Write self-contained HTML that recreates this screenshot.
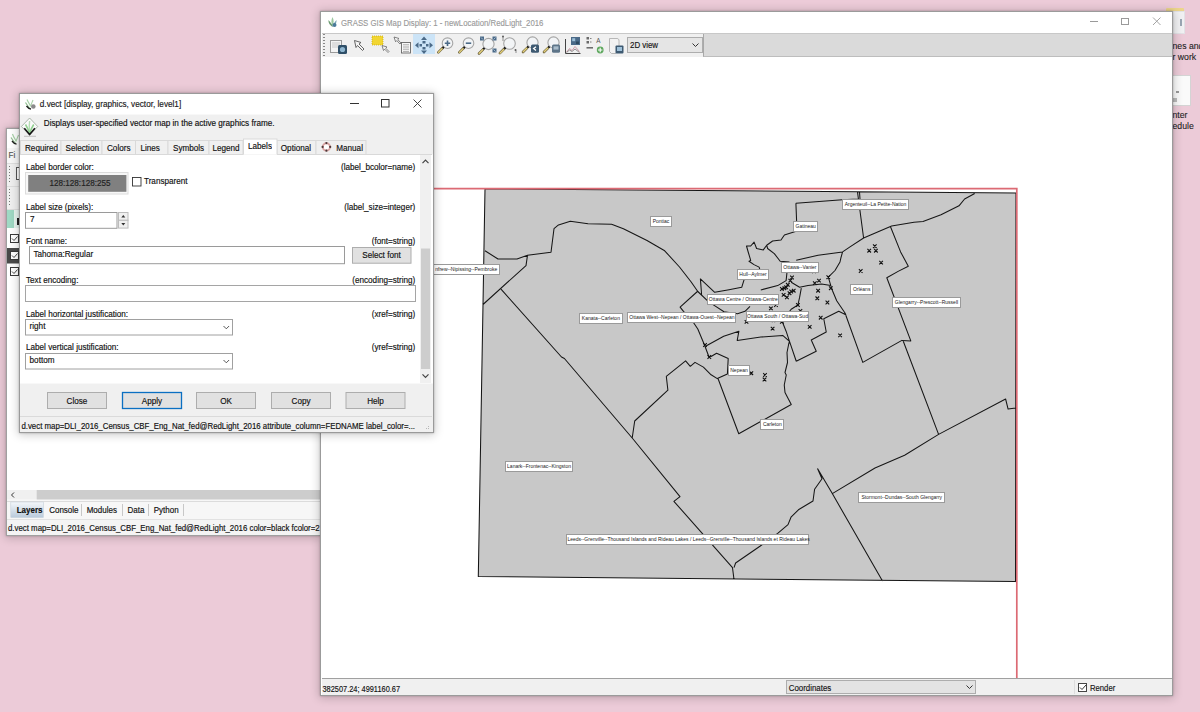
<!DOCTYPE html>
<html><head><meta charset="utf-8">
<style>
*{box-sizing:border-box;margin:0;padding:0}
html,body{width:1200px;height:712px;overflow:hidden}
body{background:#eccbd8;font-family:"Liberation Sans",sans-serif;font-size:8px;color:#111;position:relative}
.a{position:absolute}
.t{position:absolute;white-space:nowrap;line-height:10px;-webkit-text-stroke:0.15px currentColor;transform:scaleY(1.09);transform-origin:0 7.8px}
#dv>.t{margin-top:0.9px;font-size:8.15px}
#md .t{text-shadow:none;-webkit-text-stroke:0.12px currentColor}
.win{position:absolute;background:#fff;box-shadow:0 0 2px rgba(0,0,0,0.25),0 1px 9px 1px rgba(0,0,0,0.2)}
.win::after{content:"";position:absolute;left:0;top:0;right:0;bottom:0;border:1px solid var(--bc,#8f8f8f);pointer-events:none;z-index:50}
.btn{position:absolute;background:#e1e1e1;border:1px solid #adadad;text-align:center;line-height:14px;font-size:8px}
.inp{position:absolute;background:#fff;border:1px solid #7a7a7a}
.chk{position:absolute;width:9px;height:9px;border:1px solid #333;background:#fff}
.lbl{position:absolute;background:#fff;border:1px solid #9a9a9a;font-size:5px;line-height:9px;height:11px;white-space:nowrap;padding:0;text-align:center;color:#1a1a1a;overflow:visible}
.lbl span{display:inline-block;transform:scaleY(1.12);transform-origin:50% 60%}
</style></head><body>

<!-- desktop icons right -->
<div class="a" style="left:1166px;top:8px;width:18px;height:3.5px;background:#ecd58c;border-radius:1px"></div>
<div class="a" style="left:1166px;top:11px;width:19px;height:23px;background:#f1f1f3;border:1px solid #e2e2e6"></div>
<div class="a" style="left:1180px;top:19px;width:2px;height:7px;background:#9aa6b3"></div>
<div class="t" style="left:1172.5px;top:41px;font-size:8.7px;color:#222;-webkit-text-stroke:0.1px #222">nes and</div>
<div class="t" style="left:1172.5px;top:51.5px;font-size:8.7px;color:#222;-webkit-text-stroke:0.1px #222">r work</div>
<div class="a" style="left:1170px;top:75px;width:21px;height:31px;background:#fafafa;border:1px solid #d4d4d4"></div>
<div class="a" style="left:1176px;top:91px;width:3px;height:2px;background:#999"></div>
<div class="a" style="left:1172px;top:98px;width:5px;height:4px;background:#bbb"></div>
<div class="t" style="left:1172.5px;top:110px;font-size:8.7px;color:#222;-webkit-text-stroke:0.1px #222">nter</div>
<div class="t" style="left:1172.5px;top:121px;font-size:8.7px;color:#222;-webkit-text-stroke:0.1px #222">edule</div>

<!-- Layer manager window -->
<div class="win" id="lm" style="left:6px;top:128px;width:315px;height:408px;--bc:#a0a0a0;z-index:1">
 <svg class="a" style="left:0;top:0" width="315" height="407" viewBox="6 128 315 407">
  <rect x="6" y="148" width="315" height="15" fill="#f7f7f7"/>
  <rect x="6" y="163" width="315" height="47" fill="#f0f0f0"/>
  <path d="M6 163.5h315M6 186.5h315M6 209.5h315" stroke="#dedede"/>
  <path d="M9.5 166v17M9.5 189v18" stroke="#777" stroke-width="1" stroke-dasharray="1 2"/>
  <rect x="16.5" y="167.5" width="4" height="12" fill="#fff" stroke="#555"/>
  <path d="M12.5 134 C13.5 137 15 139 16 141" stroke="#a8d2a8" stroke-width="1.2" fill="none"/><path d="M11 137.5 C12.5 140 14 142 15.5 143" stroke="#90c090" stroke-width="1.2" fill="none"/><path d="M18.5 135 C17.5 137.5 16.5 139.5 16 141.5" stroke="#a8d2a8" stroke-width="1.1" fill="none"/><path d="M12 141 C13.5 143 15 144 16.5 144" stroke="#1c1c1c" stroke-width="1.3" fill="none"/>
  <rect x="7" y="210" width="7" height="18" fill="#9fd9c4"/>
  <rect x="14" y="210" width="5" height="18" fill="#e8f6f1"/>
  <rect x="17" y="218" width="2.5" height="7" fill="#222"/>
  <rect x="7" y="248" width="13" height="15.5" fill="#4a4a4a"/>
  <g fill="#fff" stroke="#3a3a3a" stroke-width="1">
   <rect x="10.5" y="234.5" width="8" height="8"/>
   <rect x="10.5" y="251.5" width="8" height="8"/>
   <rect x="10.5" y="267.5" width="8" height="8"/>
  </g>
  <path d="M12 238.5l2 2l3.5-4M12 255.5l2 2l3.5-4M12 271.5l2 2l3.5-4" stroke="#333" fill="none" stroke-width="0.9"/>
  <rect x="6" y="490" width="315" height="9.7" fill="#f0f0f0"/>
  <rect x="36.7" y="490" width="284" height="9.7" fill="#cdcdcd"/>
  <path d="M14 492.5 L11.5 495 L14 497.5" stroke="#333" fill="none" stroke-width="1"/>
  <rect x="6" y="499.7" width="315" height="19.3" fill="#f7f7f7"/>
  <path d="M6 501.5h315" stroke="#dcdcdc"/>
  <defs><linearGradient id="lt" x1="0" y1="0" x2="0" y2="1"><stop offset="0" stop-color="#f4f7fa"/><stop offset="1" stop-color="#b9cadb"/></linearGradient></defs>
  <rect x="10.8" y="502" width="32.5" height="15.5" fill="url(#lt)" stroke="#c5d0da" stroke-width="0.6"/>
  <path d="M81.5 504v12M122.5 504v12M148.5 504v12M183.5 504v12" stroke="#c8c8c8"/>
  <path d="M6 519.5h315" stroke="#e2e2e2"/>
  <rect x="6" y="520" width="315" height="15" fill="#f4f4f4"/>
 </svg>
 <div class="t" style="left:2.5px;top:22.5px;font-size:8px;color:#555">Fi</div>
 <div class="t" style="left:10.7px;top:377.5px;font-weight:bold;font-size:8px">Layers</div>
 <div class="t" style="left:43.2px;top:377.5px;font-size:8px">Console</div>
 <div class="t" style="left:80.7px;top:377.5px;font-size:8px">Modules</div>
 <div class="t" style="left:121.5px;top:377.5px;font-size:8px">Data</div>
 <div class="t" style="left:147.7px;top:377.5px;font-size:8px">Python</div>
 <div class="t" style="left:2px;top:396px;font-size:7.85px">d.vect map=DLI_2016_Census_CBF_Eng_Nat_fed@RedLight_2016 color=black fcolor=2</div>
</div>

<!-- Map display window -->
<div class="win" id="md" style="left:320px;top:11px;width:853px;height:685px;--bc:#9b9b9b;z-index:2"><div class="a" style="left:1px;top:1px;width:851px;height:683px">
 <!-- title -->
 <svg class="a" style="left:6px;top:4px" width="11" height="12" viewBox="0 0 11 12">
  <path d="M5.5 11 C3 9 1 7 1.5 4 C3 6 4 7 5.5 9 Z" fill="#6a9a70"/>
  <path d="M5.5 11 C8 9 10 7 9.5 4 C8 6 7 7 5.5 9 Z" fill="#7aa4b4"/>
  <path d="M5.5 10 C4 7 4 4 5.5 1 C7 4 7 7 5.5 10 Z" fill="#9cc8a0"/>
  <circle cx="7.5" cy="9" r="2" fill="#4a7a9a"/>
 </svg>
 <div class="t" style="left:20px;top:6.8px;font-size:7.8px;color:#9a9a9a;text-shadow:none">GRASS GIS Map Display: 1 - newLocation/RedLight_2016</div>
 <div class="a" style="left:769px;top:9px;width:8px;height:1px;background:#9a9a9a"></div>
 <div class="a" style="left:800px;top:5.5px;width:7.5px;height:7.5px;border:1px solid #9a9a9a"></div>
 <svg class="a" style="left:831px;top:5px" width="10" height="10"><path d="M1 0.5L8.5 8M8.5 0.5L1 8" stroke="#9a9a9a" stroke-width="0.9"/></svg>
 <!-- toolbar -->
 <div class="a" style="left:1px;top:21px;width:850px;height:24px;background:#f0f0f0;border-top:1px solid #c8c8c8"></div>
 <div class="a" style="left:2px;top:22px;width:2px;height:22px;background:repeating-linear-gradient(#888 0 1px,transparent 1px 3px)"></div>
 <div class="a" style="left:382px;top:22px;width:469px;height:23px;background:#dadada;border-left:1px solid #a8a8a8;border-bottom:1px solid #bdbdbd"></div>
 <div class="a" style="left:306px;top:25px;width:76px;height:16px;background:#e5e5e5;border:1px solid #adadad"></div>
 <div class="t" style="left:309px;top:28.5px;font-size:7.9px;color:#111;transform:scaleY(1.15)">2D view</div>
 <svg class="a" style="left:371px;top:31px" width="7" height="4"><path d="M0.5 0.5L3.5 3.5L6.5 0.5" stroke="#333" fill="none"/></svg>
 <div class="a" style="left:92px;top:22px;width:22px;height:20px;background:#cce4f7"></div>
 <svg class="a" style="left:0;top:0;z-index:5" width="851" height="45" viewBox="321 12 851 45">
  <!-- 1 display map -->
  <rect x="330.5" y="40.5" width="11" height="12" fill="#f4f4f4" stroke="#9a9a9a"/>
  <path d="M332 43h8M332 45h8M332 47h6" stroke="#c8c8c8"/>
  <rect x="338" y="45" width="9" height="9" rx="1.5" fill="#2f4f68"/>
  <circle cx="342.5" cy="49.5" r="2.6" fill="#8fb6d0"/>
  <!-- 2 pointer -->
  <path d="M354.5 40.5 L361 42.5 L359 44 L364 49 L362.5 50.5 L357.5 45.5 L356 47.5 Z" fill="#f4f4f4" stroke="#555" stroke-width="0.9"/>
  <!-- 3 select -->
  <rect x="372" y="36" width="11" height="9" fill="#f2d633" stroke="#c9a800" stroke-dasharray="1 1" stroke-width="0.7"/>
  <path d="M382 45.5 L387 47 L385.7 48.2 L389 51.5 L388 52.5 L384.7 49.2 L383.5 50.5 Z" fill="#f4f4f4" stroke="#666" stroke-width="0.8"/>
  <!-- 4 query -->
  <path d="M394 37 L399 38.5 L397.8 39.6 L401 43 L400 44 L396.8 40.6 L395.6 41.8 Z" fill="#f4f4f4" stroke="#666" stroke-width="0.8"/>
  <rect x="401.5" y="42.5" width="9" height="10.5" fill="#f7f7f7" stroke="#666" stroke-width="0.9"/>
  <path d="M403 44.8h6M403 47h6M403 49.2h6M403 51.4h6" stroke="#777" stroke-width="0.6"/>
  <!-- 5 pan -->
  <g fill="#4b6a88">
   <path d="M424 36.5 L427 40 L421 40 Z"/><path d="M424 54 L427 50.5 L421 50.5 Z"/>
   <path d="M415 45.2 L418.5 42.2 L418.5 48.2 Z"/><path d="M433 45.2 L429.5 42.2 L429.5 48.2 Z"/>
   <rect x="422.5" y="41" width="3" height="2.5"/><rect x="422.5" y="47" width="3" height="2.5"/>
   <rect x="419.5" y="44" width="2.5" height="2.5"/><rect x="426" y="44" width="2.5" height="2.5"/>
  </g>
  <!-- 6 zoom in -->
  <circle cx="447.5" cy="43.2" r="5.3" fill="#f2f4f6" stroke="#a5a5a5" stroke-width="1.1"/><path d="M443.8 46.9 L442.0 48.7" stroke="#111" stroke-width="2.2"/><path d="M442.0 48.7 L438.3 52.4" stroke="#6d6440" stroke-width="2.6" stroke-linecap="round"/><path d="M442.0 48.7 L438.5 52.2" stroke="#e3cf7a" stroke-width="1.4" stroke-linecap="round"/><path d="M444.8 43.2h5.4M447.5 40.5v5.4" stroke="#4b6a88" stroke-width="1.6"/>
  <!-- 7 zoom out -->
  <circle cx="468.5" cy="43.2" r="5.3" fill="#f2f4f6" stroke="#a5a5a5" stroke-width="1.1"/><path d="M464.8 46.9 L463.0 48.7" stroke="#111" stroke-width="2.2"/><path d="M463.0 48.7 L459.3 52.4" stroke="#6d6440" stroke-width="2.6" stroke-linecap="round"/><path d="M463.0 48.7 L459.5 52.2" stroke="#e3cf7a" stroke-width="1.4" stroke-linecap="round"/><path d="M465.8 43.2h5.4" stroke="#4b6a88" stroke-width="1.6"/>
  <!-- 8 zoom extent -->
  <circle cx="488.5" cy="44" r="5.6" fill="#f2f4f6" stroke="#a5a5a5" stroke-width="1.1"/><path d="M484.5 48.0 L482.7 49.8" stroke="#111" stroke-width="2.2"/><path d="M482.7 49.8 L479.0 53.5" stroke="#6d6440" stroke-width="2.6" stroke-linecap="round"/><path d="M482.7 49.8 L479.2 53.3" stroke="#e3cf7a" stroke-width="1.4" stroke-linecap="round"/><g fill="#4b6a88"><rect x="480" y="36.5" width="4" height="4"/><rect x="492.5" y="36.5" width="4" height="4"/><rect x="492.5" y="48.5" width="4" height="4"/></g><path d="M481 37.5l2 2M495.5 37.5l-2 2M495.5 51.5l-2 -2" stroke="#cfe0ee" stroke-width="0.7"/>
  <!-- 9 zoom region -->
  <circle cx="509.5" cy="43.5" r="5.8" fill="#f2f4f6" stroke="#a5a5a5" stroke-width="1.1"/><path d="M505.4 47.6 L503.6 49.4" stroke="#111" stroke-width="2.2"/><path d="M503.6 49.4 L499.9 53.1" stroke="#6d6440" stroke-width="2.6" stroke-linecap="round"/><path d="M503.6 49.4 L500.1 52.9" stroke="#e3cf7a" stroke-width="1.4" stroke-linecap="round"/><path d="M503 36v5M516 50.5v2.5" stroke="#666" stroke-width="0.7"/><circle cx="503" cy="36.5" r="0.9" fill="#555"/><circle cx="515.5" cy="50" r="1" fill="#555"/>
  <!-- 10 zoom back -->
  <circle cx="532.5" cy="42.5" r="5.6" fill="#f2f4f6" stroke="#a5a5a5" stroke-width="1.1"/><path d="M528.5 46.5 L526.7 48.3" stroke="#111" stroke-width="2.2"/><path d="M526.7 48.3 L523.0 52.0" stroke="#6d6440" stroke-width="2.6" stroke-linecap="round"/><path d="M526.7 48.3 L523.2 51.8" stroke="#e3cf7a" stroke-width="1.4" stroke-linecap="round"/><rect x="531" y="44.5" width="8" height="8.2" rx="1.5" fill="#3e5a72"/><path d="M536 46.7 L533.6 48.6 L536 50.5" stroke="#fff" stroke-width="1.3" fill="none"/>
  <!-- 11 zoom options -->
  <circle cx="553.5" cy="42.5" r="5.6" fill="#f2f4f6" stroke="#a5a5a5" stroke-width="1.1"/><path d="M549.5 46.5 L547.7 48.3" stroke="#111" stroke-width="2.2"/><path d="M547.7 48.3 L544.0 52.0" stroke="#6d6440" stroke-width="2.6" stroke-linecap="round"/><path d="M547.7 48.3 L544.2 51.8" stroke="#e3cf7a" stroke-width="1.4" stroke-linecap="round"/><rect x="552" y="44.5" width="8" height="8.2" rx="1.5" fill="#5d7488"/><rect x="553.5" y="46.3" width="5" height="3.3" fill="#a9bccb"/>
  <!-- 12 analyze -->
  <path d="M565.5 39 V53.5 H580.5" stroke="#444" fill="none" stroke-width="1"/>
  <path d="M566.5 52 L569.5 48.5 L572 50.5 L575 46.5 L579.5 51.5" stroke="#c98a9a" fill="none" stroke-width="0.8"/>
  <path d="M566.5 52.5 L569.5 50 L572 51.5 L575 49 L579.5 52.5" stroke="#666" fill="none" stroke-width="0.7"/>
  <rect x="571" y="37" width="9" height="8" fill="#4b6a88"/><rect x="572.2" y="38.2" width="3" height="3" fill="#9ec0d8"/><rect x="576" y="41.5" width="3" height="2.5" fill="#2f4a60"/>
  <!-- 13 overlay -->
  <rect x="586.5" y="37" width="2.5" height="2.5" fill="#6a6a6a"/><rect x="586.5" y="41" width="2.5" height="2.5" fill="#6a6a6a"/>
  <path d="M590 38.5h1.5M590 42h1.5" stroke="#666" stroke-width="0.8"/>
  <path d="M586.5 47.8h6.5" stroke="#666" stroke-width="1.5"/>
  <text x="596.3" y="42.6" font-size="6.3" fill="#555" font-family="Liberation Sans">A</text>
  <circle cx="600.2" cy="50" r="3.4" fill="#5fa85f"/><path d="M598 50h4.4M600.2 47.8v4.4" stroke="#fff" stroke-width="1.1"/>
  <!-- 14 save -->
  <path d="M609.5 38.5 H617 C618.5 38.5 619 39.5 619 41 V49 M609.5 38.5 V51.5 L611.5 53.5 H616" fill="#f3f3f3" stroke="#a8a8a8" stroke-width="0.8"/>
  <rect x="615.5" y="45.5" width="8" height="8" rx="1" fill="#3e5a72"/><rect x="617" y="47" width="5" height="4" fill="#9ec0d8"/>
 </svg>
 <!-- canvas -->
 <div class="a" style="left:1px;top:45px;width:850px;height:621px;background:#fff"></div>
 <!-- status -->
 <div class="a" style="left:1px;top:666px;width:850px;height:17px;background:#f0f0f0;border-top:1px solid #a0a0a0"></div>
 <div class="t" style="left:1.5px;top:672.5px;font-size:7.4px;color:#111;transform:scaleY(1.25)">382507.24; 4991160.67</div>
 <div class="a" style="left:465px;top:668px;width:190px;height:14px;background:#e3e3e3;border:1px solid #adadad"></div>
 <div class="t" style="left:467.7px;top:671.8px;font-size:7.9px;color:#111;transform:scaleY(1.18)">Coordinates</div>
 <svg class="a" style="left:645px;top:673px" width="7" height="4"><path d="M0.5 0.5L3.5 3.5L6.5 0.5" stroke="#333" fill="none"/></svg>
 <div class="a" style="left:753px;top:668px;width:1px;height:14px;background:#ddd"></div>
 <div class="chk" style="left:757px;top:671px;border-color:#444"></div>
 <svg class="a" style="left:758px;top:672px" width="8" height="7"><path d="M1 3.5L3 5.5L7 1" stroke="#333" fill="none"/></svg>
 <div class="t" style="left:769px;top:671.8px;font-size:7.7px;color:#111;transform:scaleY(1.18)">Render</div>
</div></div>

<!-- map -->
<div class="a" style="left:0;top:0;width:1200px;height:712px;z-index:3;pointer-events:none">
<svg class="a" style="left:0;top:0" width="1200" height="712">
 <defs><clipPath id="cv"><rect x="322" y="57" width="849" height="621"/></clipPath></defs>
 <g clip-path="url(#cv)">
 <path d="M485,188.9 L1016,193 L1015.5,581.6 L478.3,576.5 Z" fill="#c8c8c8"/>
 <path d="M485,188.9 L1016,193 L1015.5,581.6 L478.3,576.5 Z M485,250.8 L498,259 L517,259 L527.5,255.2 L551,252.3 L554,228.7 L558.5,224.9 L570.3,221.3 L588,223.7 L611.6,224.3 L623.4,228.7 L647,240.5 L664.7,250.8 L679.5,267 L691,281.8 L697.8,291.5 L707.1,300.4 L713,304.6 L724,311.7 L737.5,313.8 L745,311.3 L750,306.3 M483,304.5 L526,265.6 L527.5,255.2 M501,289.2 L561.5,357 L564.4,358.5 L632.2,438 L680,496.6 L673.9,501.3 L732.5,567.7 L734,579.5 M697.4,291.5 L680.1,307.1 L683.5,311.3 L693.6,322.7 L697.8,329 L704.6,345.2 L709,357 M701.6,294.5 L700.4,278.9 L714.7,292.3 L729,289.8 L741.7,287.3 L744.2,279.3 L744,272 M704.6,346.7 L723.7,336.2 L738.9,331.2 L737.2,340.4 L760.8,337.1 L782.7,335.4 L789.5,341.3 M708.9,357.8 L716.6,353.2 L728.2,358.6 L727.4,374 L717.3,378.6 L711.1,374.8 L703.4,367.1 L695,362.4 L690.3,366.3 L685.6,360.9 L666.3,376.3 M632.2,438 L634.7,421 L667.9,390.2 L666.3,376.3 M717.9,378.3 L738.75,433.75 L791.25,404.5 L785,392.5 L784.25,385 L786.25,375 L785,372.5 L787.5,362.5 L787,352.5 L788.75,343.75 L789.5,341.3 M789.5,341.3 L786.1,331.2 L782.7,322.7 L788.6,312.6 L791.2,309.2 L797.9,305 L799.6,297.4 L801.3,288.2 M760.8,289.9 L777.7,285.6 L786.1,280.6 L787,272.2 L787,262 M791.2,282.3 L799.6,287.3 L808,285.6 L821.5,284 L830.8,285.6 M796.2,260.3 L818.1,255.3 L842.6,251.9 L850,246.9 L863.6,238 L891.6,226 L914,222.2 L923,221.5 L941,214.8 L959,205.8 L964.6,199 L974.7,193.5 M842.6,251.9 L840.9,257.8 L840,262 L835,270.5 L828.3,277.2 L830.8,285.6 L832.5,290.7 L836.7,300.8 L845,313 L862.8,362.4 L901.9,340.4 L910.8,340.9 L886.8,277.7 L898.1,271.4 L908.3,266.3 L900.6,251.9 L890.5,226.7 M903.2,341 L938.6,434.4 M832.3,493.6 L875,468 L904.6,455.2 L938.6,434.4 L1005.6,399 L1008.1,409.1 L1015.7,407.9 M817.5,468.5 L832.3,493.6 L882.5,581 M817.5,468.5 L822,478.8 L814.6,489.2 L813,501 L798.4,509.8 L791,517.2 L788,524.6 L777.7,533.4 L760.3,546 L735.6,563 L734,567.7 M796.25,361.25 L816.25,351.25 L811.25,340 L826.25,332 L823.75,318.75 L838.75,311.25 L846.25,315 M789.5,341.3 L796.25,361.25 M857.5,192 L863.6,238 M859.5,192 L860,199 M795.9,203.2 L842.3,199.7 L858,199 M795.9,203.2 L797,231 L784.4,235 L781,240 L772.6,241 L766.7,245.2 L767.6,248.5 L774.3,253.6 L780.2,261.2 L789.5,262 M766.7,245.2 L763.3,249.9 L756.6,248.5 L754.1,242.1 L750.7,246 L746.5,246 L748.2,252 L750.7,260.4 L749,261.2 L754,264.6 L759.1,267.1 L760,270" fill="none" stroke="#151515" stroke-width="1.05" stroke-linejoin="round"/>
 <path d="M812.1,269.5 l3.6,3.6 m0,-3.6 l-3.6,3.6 M790.2,275.7 l3.6,3.6 m0,-3.6 l-3.6,3.6 M788.5,278.8 l3.6,3.6 m0,-3.6 l-3.6,3.6 M786.0,283.0 l3.6,3.6 m0,-3.6 l-3.6,3.6 M782.6,286.4 l3.6,3.6 m0,-3.6 l-3.6,3.6 M780.1,287.2 l3.6,3.6 m0,-3.6 l-3.6,3.6 M784.3,285.5 l3.6,3.6 m0,-3.6 l-3.6,3.6 M789.4,289.7 l3.6,3.6 m0,-3.6 l-3.6,3.6 M791.9,288.9 l3.6,3.6 m0,-3.6 l-3.6,3.6 M787.7,291.4 l3.6,3.6 m0,-3.6 l-3.6,3.6 M781.8,293.1 l3.6,3.6 m0,-3.6 l-3.6,3.6 M785.1,295.6 l3.6,3.6 m0,-3.6 l-3.6,3.6 M813.0,281.3 l3.6,3.6 m0,-3.6 l-3.6,3.6 M817.2,278.8 l3.6,3.6 m0,-3.6 l-3.6,3.6 M826.5,275.4 l3.6,3.6 m0,-3.6 l-3.6,3.6 M829.0,286.4 l3.6,3.6 m0,-3.6 l-3.6,3.6 M816.3,288.9 l3.6,3.6 m0,-3.6 l-3.6,3.6 M815.5,296.5 l3.6,3.6 m0,-3.6 l-3.6,3.6 M825.6,300.7 l3.6,3.6 m0,-3.6 l-3.6,3.6 M818.9,315.9 l3.6,3.6 m0,-3.6 l-3.6,3.6 M807.9,325.1 l3.6,3.6 m0,-3.6 l-3.6,3.6 M838.3,333.6 l3.6,3.6 m0,-3.6 l-3.6,3.6 M796.1,303.2 l3.6,3.6 m0,-3.6 l-3.6,3.6 M798.6,309.1 l3.6,3.6 m0,-3.6 l-3.6,3.6 M800.3,315.0 l3.6,3.6 m0,-3.6 l-3.6,3.6 M785.1,315.9 l3.6,3.6 m0,-3.6 l-3.6,3.6 M771.7,318.4 l3.6,3.6 m0,-3.6 l-3.6,3.6 M770.8,326.8 l3.6,3.6 m0,-3.6 l-3.6,3.6 M780.1,320.1 l3.6,3.6 m0,-3.6 l-3.6,3.6 M744.7,320.1 l3.6,3.6 m0,-3.6 l-3.6,3.6 M774.2,303.2 l3.6,3.6 m0,-3.6 l-3.6,3.6 M769.1,306.6 l3.6,3.6 m0,-3.6 l-3.6,3.6 M867.4,248.9 l3.6,3.6 m0,-3.6 l-3.6,3.6 M873.0,244.4 l3.6,3.6 m0,-3.6 l-3.6,3.6 M874.1,248.9 l3.6,3.6 m0,-3.6 l-3.6,3.6 M879.3,260.8 l3.6,3.6 m0,-3.6 l-3.6,3.6 M858.9,269.2 l3.6,3.6 m0,-3.6 l-3.6,3.6 M749.5,371.4 l3.6,3.6 m0,-3.6 l-3.6,3.6 M763.2,373.2 l3.6,3.6 m0,-3.6 l-3.6,3.6 M762.7,377.7 l3.6,3.6 m0,-3.6 l-3.6,3.6 M703.2,343.2 l3.6,3.6 m0,-3.6 l-3.6,3.6 M707.5,355.2 l3.6,3.6 m0,-3.6 l-3.6,3.6" fill="none" stroke="#111" stroke-width="1.1"/>
 <path d="M300,188.6 H1016.8 V700" fill="none" stroke="#dc6a74" stroke-width="1.7"/>
 </g>
</svg>
<div class="lbl" style="left:650px;top:216px;width:22px"><span>Pontiac</span></div>
<div class="lbl" style="left:433px;top:264px;width:66.5px"><span>nfrew--Nipissing--Pembroke</span></div>
<div class="lbl" style="left:579.2px;top:313.4px;width:43.4px"><span>Kanata--Carleton</span></div>
<div class="lbl" style="left:627.3px;top:312.2px;width:109.2px"><span>Ottawa West--Nepean / Ottawa-Ouest--Nepean</span></div>
<div class="lbl" style="left:736.8px;top:268.8px;width:32.4px"><span>Hull--Aylmer</span></div>
<div class="lbl" style="left:707.4px;top:294px;width:71.8px"><span>Ottawa Centre / Ottawa-Centre</span></div>
<div class="lbl" style="left:780.8px;top:261.6px;width:38.2px"><span>Ottawa--Vanier</span></div>
<div class="lbl" style="left:793.1px;top:221.3px;width:25.3px"><span>Gatineau</span></div>
<div class="lbl" style="left:841.8px;top:199px;width:67.4px"><span>Argenteuil--La Petite-Nation</span></div>
<div class="lbl" style="left:850.1px;top:283.7px;width:23.1px"><span>Orléans</span></div>
<div class="lbl" style="left:892.3px;top:297.2px;width:68.3px"><span>Glengarry--Prescott--Russell</span></div>
<div class="lbl" style="left:745.75px;top:311.25px;width:63.5px"><span>Ottawa South / Ottawa-Sud</span></div>
<div class="lbl" style="left:728px;top:364.5px;width:22px"><span>Nepean</span></div>
<div class="lbl" style="left:760.3px;top:418.8px;width:24.1px"><span>Carleton</span></div>
<div class="lbl" style="left:504.6px;top:460.5px;width:68.9px"><span>Lanark--Frontenac--Kingston</span></div>
<div class="lbl" style="left:566.4px;top:534.3px;width:242.6px"><span>Leeds--Grenville--Thousand Islands and Rideau Lakes / Leeds--Grenville--Thousand Islands et Rideau Lakes</span></div>
<div class="lbl" style="left:858.3px;top:492.1px;width:87px"><span>Stormont--Dundas--South Glengarry</span></div>
</div>

<!-- d.vect dialog -->
<div class="win" id="dv" style="left:19px;top:93px;width:415px;height:340px;--bc:#9a9a9a;background:#f0f0f0;z-index:4">
 <svg class="a" style="left:0;top:0" width="415" height="339" viewBox="19 93 415 339">
  <!-- title bar -->
  <rect x="19" y="93" width="415" height="21.5" fill="#fff"/>
  <!-- title icon -->
  <path d="M27 99.5 C28 102 29.5 104 30.5 106" stroke="#a8d2a8" stroke-width="1.2" fill="none"/>
  <path d="M25.5 102.5 C27 105 28.5 107 30 108.5" stroke="#90c090" stroke-width="1.2" fill="none"/>
  <path d="M33 100 C32 102.5 31 104.5 30.5 106.5" stroke="#a8d2a8" stroke-width="1.1" fill="none"/>
  <path d="M26.5 106 C28 108 29.5 109 31 109" stroke="#1c1c1c" stroke-width="1.3" fill="none"/>
  <circle cx="33.3" cy="106.5" r="2.3" fill="#8a8a8a"/>
  <!-- min max close -->
  <path d="M350 103.5h9" stroke="#333" stroke-width="1"/>
  <rect x="381.5" y="99.5" width="7.5" height="7.5" fill="none" stroke="#333"/>
  <path d="M413.5 99.5L421.5 107.5M421.5 99.5L413.5 107.5" stroke="#333" stroke-width="0.9"/>
  <!-- description icon -->
  <path d="M29.6 118 L37.7 126.5 L29.6 135 L21.4 126.5 Z" fill="#fafafa" stroke="#8a9a8a" stroke-width="0.7"/>
  <path d="M29.6 121 C29 125 29.2 129 29.6 133" stroke="#b5dcb5" stroke-width="1.4" fill="none"/>
  <path d="M25.5 124.5 C27 127 28.5 130 29.6 133 C30.7 130 32.2 127 33.7 124.5" stroke="#8fcf8f" stroke-width="1.5" fill="none"/>
  <path d="M24.3 128.2 L29.6 134.6 L34.9 128.2" stroke="#151515" stroke-width="1.6" fill="none"/>
  <path d="M24 136.3h12" stroke="#b0b0b0" stroke-width="0.8"/>
  <!-- tabs -->
  <g fill="#f0f0f0" stroke="#d9d9d9" stroke-width="1">
   <rect x="20.5" y="140.5" width="40.5" height="14"/>
   <rect x="61" y="140.5" width="41" height="14"/>
   <rect x="102" y="140.5" width="33.5" height="14"/>
   <rect x="135.5" y="140.5" width="32.5" height="14"/>
   <rect x="168" y="140.5" width="41" height="14"/>
   <rect x="209" y="140.5" width="34" height="14"/>
   <rect x="277" y="140.5" width="39" height="14"/>
   <rect x="316" y="140.5" width="50" height="14"/>
  </g>
  <rect x="243.5" y="139" width="33.5" height="16" fill="#fff" stroke="#d9d9d9"/>
  <!-- manual icon -->
  <circle cx="326.4" cy="146.9" r="3.6" fill="#fff" stroke="#d9a3a3" stroke-width="2"/>
  <g fill="#4a3838"><circle cx="326.4" cy="143.1" r="1.1"/><circle cx="326.4" cy="150.7" r="1.1"/><circle cx="322.6" cy="146.9" r="1.1"/><circle cx="330.2" cy="146.9" r="1.1"/></g>
  <!-- panel -->
  <rect x="20" y="154.5" width="413" height="229" fill="#fff"/>
  <path d="M20 154.5h223.5M277 154.5h155" stroke="#d9d9d9"/>
  <!-- scrollbar -->
  <rect x="420" y="155" width="11" height="228" fill="#f0f0f0"/>
  <rect x="421" y="248.5" width="9" height="120.5" fill="#cdcdcd"/>
  <path d="M422.5 163.2 L425.5 160.2 L428.5 163.2" stroke="#444" stroke-width="1.2" fill="none"/>
  <path d="M422.5 374.3 L425.5 377.3 L428.5 374.3" stroke="#444" stroke-width="1.2" fill="none"/>
  <!-- color button -->
  <rect x="25.5" y="172.5" width="102.5" height="21.5" fill="#f7f7f7" stroke="#dcdcdc"/>
  <rect x="28.2" y="175" width="98.2" height="16.8" fill="#808080"/>
  <!-- transparent checkbox -->
  <rect x="132.5" y="177.5" width="8.5" height="8.5" fill="#fff" stroke="#333" stroke-width="0.9"/>
  <!-- spin -->
  <rect x="25.5" y="212.5" width="91.5" height="15.8" fill="#fff" stroke="#9a9a9a"/>
  <rect x="118.5" y="212.5" width="9.5" height="7.8" fill="#f0f0f0" stroke="#bcbcbc"/>
  <rect x="118.5" y="220.3" width="9.5" height="7.8" fill="#f0f0f0" stroke="#bcbcbc"/>
  <path d="M121.3 217.5 L123.3 215 L125.3 217.5 Z M121.3 223 L123.3 225.5 L125.3 223 Z" fill="#333"/>
  <!-- font input -->
  <rect x="29.5" y="246.5" width="315" height="17.2" fill="#fff" stroke="#9a9a9a"/>
  <rect x="352.5" y="247.5" width="58.5" height="15.7" fill="#e1e1e1" stroke="#adadad"/>
  <!-- encoding input -->
  <rect x="25.5" y="285.5" width="390" height="16" fill="#fff" stroke="#a5a5a5"/>
  <!-- selects -->
  <rect x="25.5" y="319.5" width="207" height="15.5" fill="#fff" stroke="#a0a0a0"/>
  <path d="M223.5 326 L226.3 328.8 L229.1 326" stroke="#444" fill="none" stroke-width="0.9"/>
  <rect x="25.5" y="353.5" width="207" height="15.5" fill="#fff" stroke="#a0a0a0"/>
  <path d="M223.5 360 L226.3 362.8 L229.1 360" stroke="#444" fill="none" stroke-width="0.9"/>
  <!-- buttons -->
  <g fill="#e1e1e1" stroke="#adadad">
   <rect x="47.5" y="392.5" width="59" height="16"/>
   <rect x="196.5" y="392.5" width="59" height="16"/>
   <rect x="271.5" y="392.5" width="59" height="16"/>
   <rect x="346" y="392.5" width="59" height="16"/>
  </g>
  <rect x="122.5" y="392.5" width="59" height="16" fill="#e1e1e1" stroke="#0a6fc2" stroke-width="1.3"/>
  <!-- status line -->
  <path d="M20 416.5h412" stroke="#dadada"/>
  <g fill="#b8b8b8"><rect x="428" y="426" width="1" height="1"/><rect x="426" y="428" width="1" height="1"/><rect x="428" y="428" width="1" height="1"/></g>
 </svg>
 <div class="t" style="left:20.8px;top:5.8px;font-size:8.2px;color:#1a1a1a">d.vect [display, graphics, vector, level1]</div>
 <div class="t" style="left:24.8px;top:25.2px;font-size:8.17px">Displays user-specified vector map in the active graphics frame.</div>
 <div class="t" style="left:6px;top:50px">Required</div>
 <div class="t" style="left:46.5px;top:50px">Selection</div>
 <div class="t" style="left:88px;top:50px">Colors</div>
 <div class="t" style="left:121.5px;top:50px">Lines</div>
 <div class="t" style="left:154px;top:50px">Symbols</div>
 <div class="t" style="left:193.5px;top:50px">Legend</div>
 <div class="t" style="left:229px;top:48.5px">Labels</div>
 <div class="t" style="left:261.8px;top:50px">Optional</div>
 <div class="t" style="left:317.3px;top:50px">Manual</div>

 <div class="t" style="left:7px;top:69px">Label border color:</div>
 <div class="t" style="right:18.7px;top:69px">(label_bcolor=name)</div>
 <div class="t" style="left:30.5px;top:85.5px;color:#222">128:128:128:255</div>
 <div class="t" style="left:125px;top:83px">Transparent</div>
 <div class="t" style="left:7px;top:109px">Label size (pixels):</div>
 <div class="t" style="right:18.7px;top:109px">(label_size=integer)</div>
 <div class="t" style="left:11px;top:121.5px">7</div>
 <div class="t" style="left:7px;top:142.7px">Font name:</div>
 <div class="t" style="right:18.7px;top:142.7px">(font=string)</div>
 <div class="t" style="left:14.5px;top:156px">Tahoma:Regular</div>
 <div class="t" style="left:343.3px;top:157px">Select font</div>
 <div class="t" style="left:7px;top:181.8px">Text encoding:</div>
 <div class="t" style="right:18.7px;top:181.8px">(encoding=string)</div>
 <div class="t" style="left:7px;top:215.8px">Label horizontal justification:</div>
 <div class="t" style="right:18.7px;top:215.8px">(xref=string)</div>
 <div class="t" style="left:10.6px;top:228.2px">right</div>
 <div class="t" style="left:7px;top:249.2px">Label vertical justification:</div>
 <div class="t" style="right:18.7px;top:249.2px">(yref=string)</div>
 <div class="t" style="left:10.6px;top:262.2px">bottom</div>
 <div class="t" style="left:28.5px;top:303.4px;width:59px;text-align:center">Close</div>
 <div class="t" style="left:103.5px;top:303.4px;width:59px;text-align:center">Apply</div>
 <div class="t" style="left:177.5px;top:303.4px;width:59px;text-align:center">OK</div>
 <div class="t" style="left:252.5px;top:303.4px;width:59px;text-align:center">Copy</div>
 <div class="t" style="left:327px;top:303.4px;width:59px;text-align:center">Help</div>
 <div class="t" style="left:2.4px;top:327.7px;font-size:7.85px">d.vect map=DLI_2016_Census_CBF_Eng_Nat_fed@RedLight_2016 attribute_column=FEDNAME label_color=...</div>
</div>

</body></html>
